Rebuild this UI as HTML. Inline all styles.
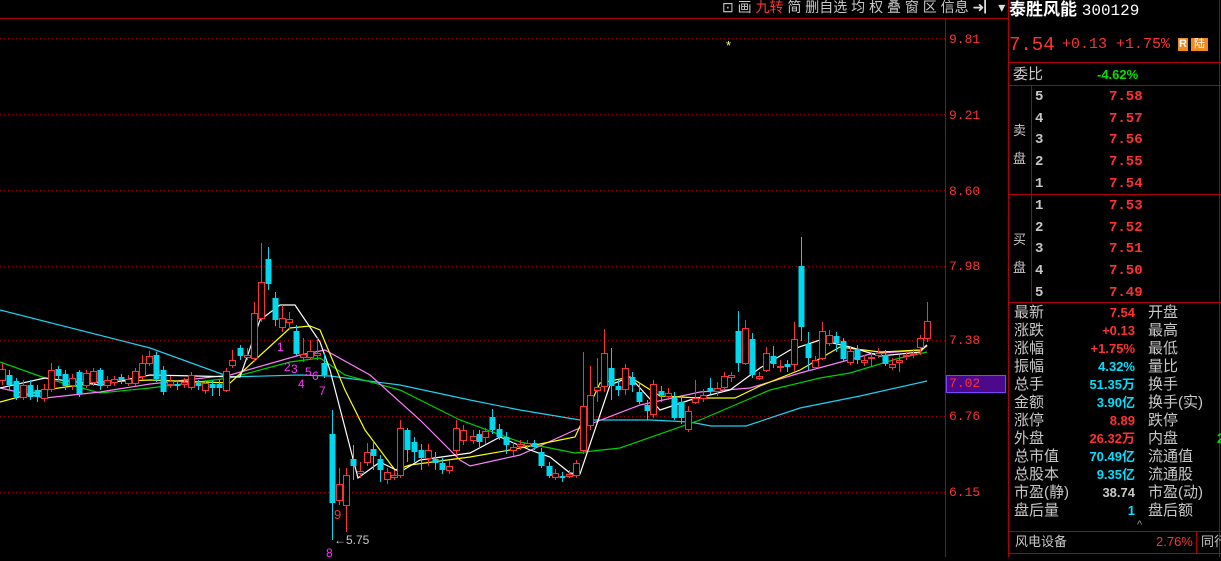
<!DOCTYPE html>
<html><head><meta charset="utf-8"><style>
*{margin:0;padding:0}
body{width:1221px;height:557px;background:#000;overflow:hidden;position:relative;font-family:"Liberation Sans","Noto Sans CJK SC",sans-serif;}
.t{position:absolute;white-space:nowrap;font-size:14px;line-height:16px}
.g{color:#c8c8c8}.r{color:#ff3232}.c{color:#00e0ff}.gr{color:#00e000}
.m{font-family:"Liberation Mono","Noto Sans CJK SC",monospace}
.hl{position:absolute;background:#b00000;height:1px}
.vl{position:absolute;background:#b00000;width:1px}
</style></head><body>
<svg id="ch" width="1221" height="557" style="position:absolute;left:0;top:0"></svg>

<div class="hl" style="left:0;top:18px;width:1008px"></div>
<div class="vl" style="left:945px;top:18px;height:539px"></div>
<div class="vl" style="left:1008px;top:0;height:557px"></div>
<div class="vl" style="left:1219px;top:0;height:557px"></div>

<div class="t g" style="left:722px;top:-1px;font-size:14px;line-height:17px">⊡ 画 <span class="r">九转</span> 简 删自选 均 权 叠 窗 区 信息 <span style="color:#ddd">➜▏▾</span></div>

<div class="t m r" style="left:949px;top:32px;font-size:13px">9.81</div>
<div class="t m r" style="left:949px;top:108px;font-size:13px">9.21</div>
<div class="t m r" style="left:949px;top:184px;font-size:13px">8.60</div>
<div class="t m r" style="left:949px;top:259px;font-size:13px">7.98</div>
<div class="t m r" style="left:949px;top:333px;font-size:13px">7.38</div>
<div style="position:absolute;left:946px;top:375px;width:58px;height:16px;background:#4b0a8c;border:1px solid #8040ff"></div>
<div class="t m r" style="left:949px;top:376px;font-size:13px">7.02</div>
<div class="t m r" style="left:949px;top:409px;font-size:13px">6.76</div>
<div class="t m r" style="left:949px;top:485px;font-size:13px">6.15</div>

<div class="t" style="left:1009px;top:0px;font-size:17px;line-height:20px;color:#fff;font-weight:bold">泰胜风能 <span style="font-weight:normal;font-family:'Liberation Mono',monospace;font-size:16px">300129</span></div>
<div class="t m r" style="left:1009px;top:35px;font-size:19px;line-height:20px">7.54</div>
<div class="t m r" style="left:1062px;top:37px;font-size:15px">+0.13 +1.75%</div>
<div style="position:absolute;left:1178px;top:38px;width:10px;height:13px;background:#f08a1c;color:#fff;font-size:11px;line-height:13px;text-align:center;font-weight:bold">R</div>
<div style="position:absolute;left:1191px;top:38px;width:17px;height:13px;background:#f08a1c;color:#fff;font-size:11px;line-height:13px;text-align:center">陆</div>
<div class="hl" style="left:1008px;top:62px;width:213px"></div>
<div class="t g" style="left:1013px;top:66px;font-size:15px;line-height:18px">委比</div>
<div class="t gr" style="left:1097px;top:67px;font-weight:bold;font-size:13px">-4.62%</div>
<div class="hl" style="left:1008px;top:85px;width:213px"></div>
<div class="hl" style="left:1008px;top:194px;width:213px"></div>
<div class="hl" style="left:1008px;top:302px;width:213px"></div>
<div class="vl" style="left:1031px;top:85px;height:217px"></div>
<div class="t g" style="left:1013px;top:117px;font-size:13px;line-height:28px">卖<br>盘</div>
<div class="t g" style="left:1013px;top:226px;font-size:13px;line-height:28px">买<br>盘</div>
<div id="ob"></div>
<div id="st"></div>
<div class="t g" style="left:1137px;top:517px;font-size:11px;color:#999">^</div>
<div class="hl" style="left:1008px;top:531px;width:213px"></div>
<div class="hl" style="left:1008px;top:553px;width:213px"></div>
<div class="vl" style="left:1196px;top:531px;height:22px"></div>
<div class="t g" style="left:1015px;top:534px;font-size:13px">风电设备</div>
<div class="t r" style="left:1156px;top:534px;font-size:13px">2.76%</div>
<div class="t g" style="left:1201px;top:534px;font-size:13px">同行</div>

<div class="t" style="left:726px;top:38px;color:#ffff80;font-size:13px">*</div>
<div class="t" style="left:277px;top:339px;color:#ff30ff;font-size:12px">1</div>
<div class="t" style="left:284px;top:359px;color:#ff30ff;font-size:12px">2</div>
<div class="t" style="left:291px;top:361px;color:#ff30ff;font-size:12px">3</div>
<div class="t" style="left:298px;top:376px;color:#ff30ff;font-size:12px">4</div>
<div class="t" style="left:305px;top:364px;color:#ff30ff;font-size:12px">5</div>
<div class="t" style="left:312px;top:368px;color:#ff30ff;font-size:12px">6</div>
<div class="t" style="left:319px;top:383px;color:#ff30ff;font-size:12px">7</div>
<div class="t" style="left:326px;top:545px;color:#ff30ff;font-size:12px">8</div>
<div class="t" style="left:334px;top:507px;color:#ff3232;font-size:13px">9</div>
<div class="t g" style="left:334px;top:532px;font-size:12px">←5.75</div>

<script>
var S=document.getElementById('ch'),h='';
[38,114,190,266,340,416,492].forEach(function(y){h+='<line x1="0" x2="945" y1="'+y+'.5" y2="'+y+'.5" stroke="#a00000" stroke-dasharray="1,3"/>';});
function pl(c,p){h+='<polyline fill="none" stroke="'+c+'" stroke-width="1.2" points="'+p+'"/>';}
pl('#20d0f0','0,310 150,348 230,377 300,375 330,376 400,385 470,400 520,410 580,420 650,420 690,422 711,426 746,426 800,408 860,396 927,381');
pl('#00d000','0,362 45,378 100,393 150,388 230,378 290,362 320,358 345,375 400,390 460,420 520,442 560,450 575,453 620,448 700,420 770,390 820,378 850,373 900,358 927,352');
pl('#ff80ff','0,388 45,398 100,392 150,384 230,375 300,355 325,350 370,375 420,420 460,460 470,466 520,455 575,430 640,405 700,392 750,388 800,373 830,365 870,354 920,350 927,345');
pl('#ffff00','0,402 45,390 100,382 150,380 230,383 290,328 310,326 320,330 345,390 365,430 395,470 410,465 470,457 510,450 550,442 575,437 600,383 630,377 660,396 700,398 735,398 760,386 800,370 840,347 880,352 920,350 927,346');
pl('#ffffff','0,388 45,378 100,385 150,375 240,377 260,320 280,305 295,305 320,342 330,370 358,478 380,462 400,472 420,460 470,453 500,437 530,450 550,457 570,473 580,474 610,385 630,377 660,410 690,400 730,390 760,368 790,350 820,340 850,347 880,356 920,352 927,345');
var C=[[2,1,369,380,363,385],[9,0,375,385,370,390],[16,0,381,397,378,400],[23,1,385,397,380,400],[30,0,385,397,380,400],[37,0,390,397,385,402],[44,1,389,398,384,402],[51,1,370,389,363,392],[58,0,369,376,366,380],[65,0,374,386,370,390],[72,1,378,385,374,390],[79,0,372,394,370,397],[86,1,373,385,370,388],[93,1,371,382,368,386],[100,0,370,386,368,390],[107,1,380,385,376,388],[114,1,379,382,376,386],[121,0,377,380,374,384],[128,1,379,383,375,386],[135,1,371,383,368,386],[142,1,363,376,355,380],[149,1,356,363,351,366],[156,0,355,379,352,382],[163,0,370,392,366,395],[170,1,381,384,376,388],[177,0,384,386,380,390],[184,1,382,384,378,388],[191,1,375,387,372,390],[198,0,383,386,380,390],[205,1,383,390,380,394],[212,0,384,388,380,396],[219,0,384,388,380,396],[226,1,371,390,368,392],[232,1,360,365,350,368],[240,0,348,356,345,360],[247,1,355,357,348,360],[254,1,313,358,302,362],[261,1,282,318,243,322],[268,0,259,284,247,290],[275,0,298,320,292,326],[282,1,318,327,305,332],[289,1,319,322,312,330],[296,0,331,354,325,356],[303,1,354,357,338,362],[310,1,351,357,340,360],[317,1,353,355,338,360],[324,0,363,375,354,378],[332,0,434,503,410,540],[339,1,484,500,468,505],[346,1,475,505,468,532],[353,0,459,466,445,480],[360,1,471,473,462,478],[367,1,452,462,443,466],[373,0,449,456,440,470],[380,0,459,470,455,482],[387,1,472,479,468,484],[394,1,475,477,470,480],[400,1,428,475,420,478],[407,0,430,450,428,462],[414,0,442,452,437,462],[421,0,450,458,444,470],[428,1,450,458,444,466],[435,0,459,463,452,470],[442,0,463,470,458,474],[449,1,466,470,460,474],[456,1,428,450,420,455],[463,1,430,440,425,445],
[473,1,436,440,430,444],[479,0,434,442,430,448],[485,1,431,437,428,444],[492,0,417,430,409,434],[499,0,429,437,424,440],[506,0,437,445,432,454],[513,1,447,450,442,456],[520,1,444,446,440,450],[527,1,443,445,440,448],[534,0,443,447,440,450],[541,0,452,466,448,468],[549,0,466,476,462,478],[555,1,473,477,469,480],[562,0,476,478,472,482],[569,1,474,476,470,478],[576,1,463,475,460,478],[583,1,406,450,352,454],[590,1,395,425,366,430],[597,1,387,390,358,402],[604,1,353,386,329,392],[611,0,368,386,348,400],[618,0,386,390,380,396],[625,1,368,389,364,395],[632,0,377,385,372,392],[639,0,392,402,382,404],[647,0,405,411,400,420],[653,1,384,414,380,418],[661,0,391,395,386,402],[668,1,393,396,388,400],[674,0,398,418,392,420],[681,0,402,418,395,424],[688,1,411,429,406,432],[695,1,398,402,380,404],[703,1,395,398,389,402],[710,0,388,391,378,394],[717,1,388,391,382,396],[724,1,376,387,372,390],[731,1,375,377,372,382],[738,0,331,363,311,372],[745,1,328,363,320,365],[752,0,339,375,333,378],[759,1,376,378,372,380],[766,1,353,370,347,372],[773,0,356,364,346,368],[780,1,366,367,360,372],[787,0,364,367,360,372],[794,1,339,364,322,372],[801,0,266,327,237,341],[808,0,344,358,332,370],[815,1,360,367,356,370],[822,1,331,358,322,360],[829,1,335,343,330,346],[836,0,336,343,332,352],[843,0,341,359,338,362],[850,1,351,362,347,365],[857,0,349,360,345,364],[864,1,360,362,355,366],[871,1,357,358,352,366],[878,1,353,355,348,358],[885,0,355,364,350,366],[892,1,364,367,358,370],[899,1,360,362,355,372],[906,1,355,356,352,360],[913,1,353,354,349,358],[920,1,338,347,335,355],[927,1,321,338,302,342]];
C.forEach(function(k){var x=k[0],col=k[1]?'#ff3232':'#00d8f0';
h+='<line x1="'+(x+.5)+'" x2="'+(x+.5)+'" y1="'+k[4]+'" y2="'+k[5]+'" stroke="'+col+'"/>';
var bh=Math.max(1,k[3]-k[2]);
if(k[1])h+='<rect x="'+(x-2.5)+'" y="'+(k[2]+.5)+'" width="6" height="'+bh+'" fill="#000" stroke="'+col+'"/>';
else h+='<rect x="'+(x-2.5)+'" y="'+k[2]+'" width="6" height="'+bh+'" fill="'+col+'"/>';});
S.innerHTML=h;
var ob='',ask=['7.58','7.57','7.56','7.55','7.54'],bid=['7.53','7.52','7.51','7.50','7.49'];
for(var i=0;i<5;i++){var y=89+i*21.7;ob+='<div class="t g m" style="left:1035px;top:'+y+'px;font-weight:bold">'+(5-i)+'</div><div class="t r m" style="left:1109px;top:'+y+'px;font-weight:bold">'+ask[i]+'</div>';
y=198+i*21.7;ob+='<div class="t g m" style="left:1035px;top:'+y+'px;font-weight:bold">'+(i+1)+'</div><div class="t r m" style="left:1109px;top:'+y+'px;font-weight:bold">'+bid[i]+'</div>';}
document.getElementById('ob').innerHTML=ob;
var R=[['最新','7.54','r','开盘'],['涨跌','+0.13','r','最高'],['涨幅','+1.75%','r','最低'],['振幅','4.32%','c','量比'],['总手','51.35万','c','换手'],['金额','3.90亿','c','换手(实)'],['涨停','8.89','r','跌停'],['外盘','26.32万','r','内盘'],['总市值','70.49亿','c','流通值'],['总股本','9.35亿','c','流通股'],['市盈(静)','38.74','g','市盈(动)'],['盘后量','1','c','盘后额']],s='';
R.forEach(function(r,i){var y=304+i*18;s+='<div class="t g" style="left:1014px;top:'+y+'px;font-size:15px;line-height:18px">'+r[0]+'</div><div class="t '+r[2]+'" style="right:86px;top:'+(y+1)+'px;font-weight:bold;font-size:13px">'+r[1]+'</div><div class="t g" style="left:1148px;top:'+y+'px;font-size:15px;line-height:18px">'+r[3]+'</div>';});
s+='<div class="t gr" style="left:1217px;top:430px;font-weight:bold">2</div>';
document.getElementById('st').innerHTML=s;
</script>
</body></html>
